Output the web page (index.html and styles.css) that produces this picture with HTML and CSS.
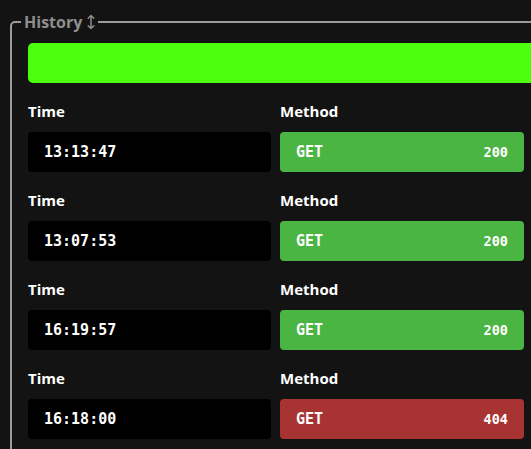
FILE: index.html
```html
<!DOCTYPE html>
<html>
<head>
<meta charset="utf-8">
<link rel="stylesheet" href="styles.css">
</head>
<body>
<fieldset class="history">
  <legend class="history-legend">History <svg class="sort-icon" width="8" height="16" viewBox="0 0 8 16"><path d="M4 1.5V14.5M1.2 4.3L4 1.5L6.8 4.3M1.2 11.7L4 14.5L6.8 11.7" fill="none" stroke="#8e8e8e" stroke-width="1.5" stroke-linecap="round" stroke-linejoin="round"/></svg></legend>
  <div class="status-bar"></div>
  <div class="entries">
    <div class="cell"><div class="label">Time</div><div class="box time">13:13:47</div></div>
    <div class="cell"><div class="label">Method</div><div class="box method ok"><span class="verb">GET</span><span class="code">200</span></div></div>

    <div class="cell"><div class="label">Time</div><div class="box time">13:07:53</div></div>
    <div class="cell"><div class="label">Method</div><div class="box method ok"><span class="verb">GET</span><span class="code">200</span></div></div>

    <div class="cell"><div class="label">Time</div><div class="box time">16:19:57</div></div>
    <div class="cell"><div class="label">Method</div><div class="box method ok"><span class="verb">GET</span><span class="code">200</span></div></div>

    <div class="cell"><div class="label">Time</div><div class="box time">16:18:00</div></div>
    <div class="cell"><div class="label">Method</div><div class="box method err"><span class="verb">GET</span><span class="code">404</span></div></div>
  </div>
</fieldset>
</body>
</html>
```
FILE: styles.css
```css
html {
  overflow: hidden;
  background: #131313;
}
body {
  margin: 0;
  padding: 13px 0 0 10px;
  background: #131313;
  font-family: "Open Sans", "Noto Sans", sans-serif;
  color: #ffffff;
  width: 900px;
}
.history {
  margin: 0;
  border: 2px solid #9b9b9b;
  border-radius: 5px;
  padding: 12px 16px 20px 16px;
  min-width: 0;
}
.history-legend {
  margin-left: -7px;
  padding: 0 3px;
  color: #8e8e8e;
  font-weight: 700;
  font-size: 16px;
  line-height: 18px;
  display: flex;
  align-items: center;
  gap: 5px;
}
.sort-icon {
  display: block;
}
.status-bar {
  height: 40px;
  background: #4cff0c;
  border-radius: 5px;
}
.entries {
  display: grid;
  grid-template-columns: 243px 244px;
  column-gap: 9px;
  row-gap: 16px;
  margin-top: 16px;
}
.label {
  font-size: 15px;
  font-weight: 700;
  line-height: 24px;
  margin-bottom: 9px;
}
.box {
  height: 40px;
  border-radius: 4px;
  display: flex;
  align-items: center;
  padding: 0 16px;
  box-sizing: border-box;
  font-family: "DejaVu Sans Mono", monospace;
}
.time {
  background: #000000;
  font-size: 15px;
  font-weight: 700;
}
.method {
  justify-content: space-between;
}
.ok {
  background: #4ab543;
}
.err {
  background: #a83333;
}
.verb {
  font-size: 15px;
  font-weight: 700;
}
.code {
  font-size: 13.5px;
  font-weight: 700;
}
```
